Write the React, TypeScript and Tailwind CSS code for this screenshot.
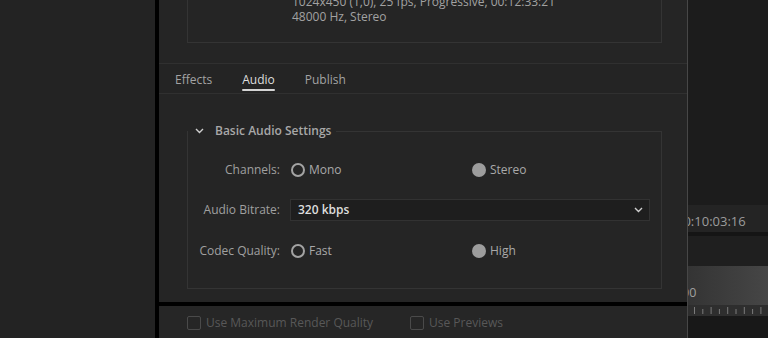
import React from "react";

const font = { fontFamily: '"Open Sans", "Liberation Sans", sans-serif' };

function Radio({ checked, label }: { checked: boolean; label: string }) {
  return (
    <div className="flex items-center">
      {checked ? (
        <span className="block w-[14px] h-[14px] rounded-full bg-[#9d9d9d]" />
      ) : (
        <span className="block w-[14px] h-[14px] rounded-full border-2 border-[#a3a3a3]" />
      )}
      <span className="ml-[4px] text-[12px] text-[#a9a9a9]">{label}</span>
    </div>
  );
}

function Chevron({ className }: { className?: string }) {
  return (
    <svg width="9" height="6" viewBox="0 0 9 6" className={className}>
      <path d="M1 1 L4.5 4.5 L8 1" fill="none" stroke="#cfcfcf" strokeWidth="1.4" />
    </svg>
  );
}

function Checkbox({ label }: { label: string }) {
  return (
    <div className="flex items-center">
      <span className="block w-[14px] h-[14px] rounded-[2px] border-[1.5px] border-[#4a4a4a]" />
      <span className="ml-[5px] text-[12px] text-[#585858]">{label}</span>
    </div>
  );
}

export default function App() {
  const ticks = Array.from({ length: 10 }, (_, i) => i);
  return (
    <div className="w-[768px] h-[338px] flex overflow-hidden bg-[#232323] select-none" style={font}>
      <div className="w-[155px] shrink-0 bg-[#232323]" />
      <div className="w-[4px] shrink-0 bg-black" />
      {/* dialog */}
      <div className="w-[528px] shrink-0 flex flex-col bg-[#252525]">
        {/* info box */}
        <div className="h-[63px] shrink-0">
          <div className="ml-[28px] w-[475px] h-[43px] border-x border-b border-[#343434] overflow-hidden">
            <div className="pl-[104px] -mt-[6px] text-[12px] leading-[15px] text-[#a2a2a2]">
              <div>1024x450 (1,0), 25 fps, Progressive, 00:12:33:21</div>
              <div>48000 Hz, Stereo</div>
            </div>
          </div>
        </div>
        {/* tabs */}
        <div className="h-[31px] shrink-0 border-y border-[#303030] flex items-stretch pl-[16px] pt-[2px] bg-[#242424]">
          <div className="flex items-center text-[12px] text-[#a3a3a3]">Effects</div>
          <div className="relative flex items-center ml-[30px] text-[12px] text-[#dedede]">
            Audio
            <div className="absolute left-0 right-0 bottom-[2px] h-[2px] bg-[#d4d4d4] rounded-full" />
          </div>
          <div className="flex items-center ml-[30px] text-[12px] text-[#a3a3a3]">Publish</div>
        </div>
        {/* content */}
        <div className="flex-1 min-h-0 flex flex-col">
          <div className="ml-[28px] w-[475px] mt-[37px] h-[158px] shrink-0 flex flex-col border-x border-b border-[#343434]">
            <div className="flex items-center h-[16px] -mt-[8px]">
              <Chevron className="ml-[7px]" />
              <span className="ml-[11px] text-[12px] font-semibold text-[#a8a8a8]">Basic Audio Settings</span>
              <div className="flex-1 h-px bg-[#343434] ml-[5px]" />
            </div>
            <div className="grid grid-cols-[92px_1fr] gap-x-[11px] mt-[20px] items-center text-[12px]">
              <div className="text-right text-[#a0a0a0] h-[22px] leading-[22px]">Channels:</div>
              <div className="flex items-center h-[22px]">
                <div className="w-[181px]">
                  <Radio checked={false} label="Mono" />
                </div>
                <Radio checked={true} label="Stereo" />
              </div>
            </div>
            <div className="grid grid-cols-[92px_1fr] gap-x-[11px] mt-[18px] items-center text-[12px]">
              <div className="text-right text-[#a0a0a0]">Audio Bitrate:</div>
              <div className="mr-[11px] -ml-[1px] h-[22px] border border-[#323232] bg-[#1e1e1e] flex items-center justify-between pl-[7px] pr-[6px]">
                <span className="font-semibold text-[#dddddd]">320 kbps</span>
                <Chevron />
              </div>
            </div>
            <div className="grid grid-cols-[92px_1fr] gap-x-[11px] mt-[19px] items-center text-[12px]">
              <div className="text-right text-[#a0a0a0] h-[22px] leading-[22px]">Codec Quality:</div>
              <div className="flex items-center h-[22px]">
                <div className="w-[181px]">
                  <Radio checked={false} label="Fast" />
                </div>
                <Radio checked={true} label="High" />
              </div>
            </div>
          </div>
        </div>
        <div className="h-[4px] shrink-0 bg-black" />
        <div className="h-[32px] shrink-0 flex items-center pl-[28px] pt-[1px] bg-[#262626]">
          <div className="w-[223px]">
            <Checkbox label="Use Maximum Render Quality" />
          </div>
          <Checkbox label="Use Previews" />
        </div>
      </div>
      <div className="w-px shrink-0 bg-[#474747]" />
      {/* right timeline panel */}
      <div className="flex-1 flex flex-col overflow-hidden bg-[#1c1c1c]">
        <div className="h-[205px] shrink-0 bg-[#1c1c1c]" />
        <div className="h-[27px] shrink-0 bg-[#242424] flex items-center pt-[6px] overflow-hidden">
          <span className="-ml-[12px] text-[13px] text-[#9c9c9c] whitespace-nowrap">00:10:03:16</span>
        </div>
        <div className="h-[4px] shrink-0 bg-[#151515]" />
        <div className="h-[30px] shrink-0 bg-[#1f1f1f]" />
        <div className="h-[39px] shrink-0 bg-gradient-to-r from-[#343434] to-[#464646] flex items-end pb-[6px] overflow-hidden">
          <span className="-ml-[6px] text-[12.5px] leading-[12px] text-[#a0a0a0] whitespace-nowrap">00</span>
        </div>
        <div className="h-[11px] shrink-0 bg-[#2e2e2e]">
          <svg width="80" height="11" viewBox="0 0 80 11">
            {ticks.map((i) => (
              <rect key={i} x={6 + i * 8.3} y={i % 2 === 0 ? 2 : 4} width="1" height={i % 2 === 0 ? 7 : 5} fill="#7a7a7a" />
            ))}
          </svg>
        </div>
        <div className="flex-1 bg-[#181818]" />
      </div>
    </div>
  );
}
